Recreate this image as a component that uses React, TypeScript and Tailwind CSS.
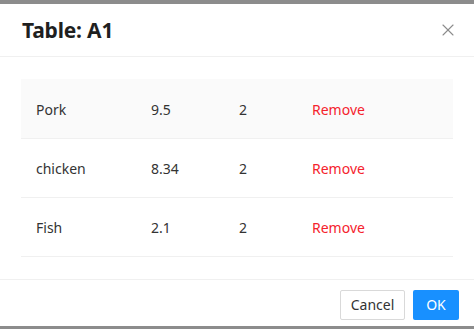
import { X } from "lucide-react";

const rows = [
  { name: "Pork", price: "9.5", qty: "2" },
  { name: "chicken", price: "8.34", qty: "2" },
  { name: "Fish", price: "2.1", qty: "2" },
];

export default function App() {
  return (
    <div
      className="w-[474px] h-[329px] bg-[#8c8c8c] flex flex-col overflow-hidden"
      style={{ fontFamily: '"Noto Sans", "Open Sans", sans-serif' }}
    >
      <div className="mt-[4px] h-[322px] bg-white flex flex-col">
        <div className="h-[53px] flex items-center justify-between pl-[22px] pr-[16px] border-b border-[#f0f0f0]">
          <h1 className="text-[21px] font-bold text-[#1f1f1f] leading-none tracking-[-0.2px]">Table: A1</h1>
          <X className="w-[20px] h-[20px] text-[#8c8c8c]" strokeWidth={1.3} />
        </div>
        <div className="px-[21px] pt-[22px] pb-[22px] border-b border-[#f0f0f0]">
          <table className="w-full text-[14px] text-[#333] border-collapse">
            <tbody>
              {rows.map((r, i) => (
                <tr
                  key={r.name}
                  className={`h-[59px] border-b border-[#f0f0f0] ${i === 0 ? "bg-[#fafafa]" : ""}`}
                >
                  <td className="w-[115px] pl-[15px] pt-[2px]">{r.name}</td>
                  <td className="w-[88px] pl-[15px] pt-[2px]">{r.price}</td>
                  <td className="w-[73px] pl-[15px] pt-[2px]">{r.qty}</td>
                  <td className="pl-[15px] pt-[2px] text-[#f5222d]">Remove</td>
                </tr>
              ))}
            </tbody>
          </table>
        </div>
        <div className="flex justify-end items-center gap-[8px] pr-[15px] pt-[10px]">
          <button className="w-[65px] h-[30px] border border-[#d9d9d9] rounded-[2px] text-[14px] text-[#333] bg-white">
            Cancel
          </button>
          <button className="w-[46px] h-[30px] rounded-[2px] text-[14px] text-white bg-[#1890ff]">
            OK
          </button>
        </div>
      </div>
    </div>
  );
}
